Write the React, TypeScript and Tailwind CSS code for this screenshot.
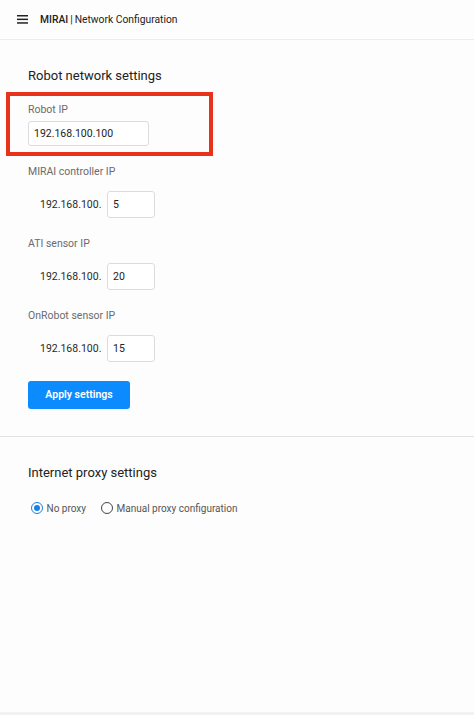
import React from "react";

const font = { fontFamily: "Roboto, 'Noto Sans', sans-serif" };

function SubnetField({ label, value }: { label: string; value: string }) {
  return (
    <div className="mt-[19px]">
      <div className="h-[13px] text-[10.5px] leading-[13px] text-[#6b6b6b]">{label}</div>
      <div className="mt-[13px] flex items-center">
        <span className="w-[79px] shrink-0 pl-[12px] text-[10.5px] text-[#2a2a2a]">192.168.100.</span>
        <div className="flex h-[27px] w-[48px] items-center rounded-[3px] border border-[#dcdcdc] bg-white px-[5px] text-[10.5px] text-[#222]">
          {value}
        </div>
      </div>
    </div>
  );
}

export default function App() {
  return (
    <div style={font} className="flex h-[715px] w-full flex-col bg-[#fdfdfd]">
      <header className="flex h-[40px] shrink-0 items-center border-b border-[#ececec] pl-[17px]">
        <svg width="11" height="9" viewBox="0 0 11 9" className="text-[#222]">
          <rect x="0" y="0" width="11" height="1.5" fill="currentColor" />
          <rect x="0" y="3.6" width="11" height="1.5" fill="currentColor" />
          <rect x="0" y="7.2" width="11" height="1.5" fill="currentColor" />
        </svg>
        <div className="ml-[12px] text-[10.3px] text-[#222]">
          <span className="font-medium">MIRAI</span>
          <span className="mx-[2px]">|</span>
          <span>Network Configuration</span>
        </div>
      </header>

      <section className="px-[28px] pt-[28px]">
        <h2 className="h-[16px] text-[13px] leading-[16px] text-[#222]">Robot network settings</h2>

        <div className="relative mt-[19px]">
          <div className="pointer-events-none absolute -top-[11px] -bottom-[10px] -left-[22px] w-[207px] border-[4px] border-[#e8321c]" />
          <div className="h-[13px] text-[10.5px] leading-[13px] text-[#6b6b6b]">Robot IP</div>
          <div className="mt-[5px] flex h-[25px] w-[121px] items-center rounded-[3px] border border-[#dcdcdc] bg-white px-[5px] text-[10.5px] text-[#222]">
            192.168.100.100
          </div>
        </div>

        <SubnetField label="MIRAI controller IP" value="5" />
        <SubnetField label="ATI sensor IP" value="20" />
        <SubnetField label="OnRobot sensor IP" value="15" />

        <button className="mt-[19px] h-[28px] w-[102px] rounded-[3px] bg-[#0c8bff] text-[10.5px] font-semibold text-white">
          Apply settings
        </button>
      </section>

      <div className="mt-[27px] h-px w-full bg-[#e2e2e2]" />

      <section className="px-[28px] pt-[28px]">
        <h2 className="h-[16px] text-[13px] leading-[16px] text-[#222]">Internet proxy settings</h2>
        <div className="mt-[20px] flex h-[14px] items-center pl-[3px] text-[10px] text-[#555]">
          <span className="flex h-[11.5px] w-[11.5px] items-center justify-center rounded-full border-[1.5px] border-[#1a7fe6]">
            <span className="h-[5.5px] w-[5.5px] rounded-full bg-[#1a7fe6]" />
          </span>
          <span className="ml-[4px]">No proxy</span>
          <span className="ml-[15px] h-[11.5px] w-[11.5px] rounded-full border-[1.5px] border-[#444]" />
          <span className="ml-[4px]">Manual proxy configuration</span>
        </div>
      </section>

      <div className="flex-1" />
      <div className="h-[3px] w-full bg-[#f2f2f2]" />
    </div>
  );
}
